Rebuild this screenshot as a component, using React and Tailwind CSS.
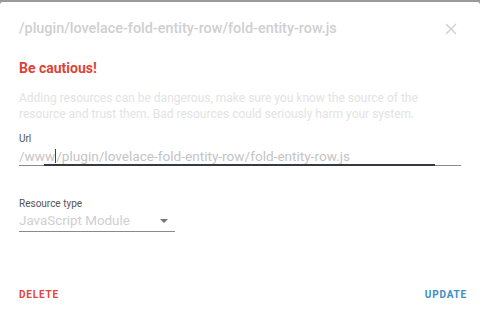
export default function App() {
  return (
    <div className="w-[480px] h-[314px] bg-[#9a9a9a] pt-[2px] overflow-hidden" style={{ fontFamily: "Roboto, 'Noto Sans', sans-serif" }}>
      <div className="h-[314px] bg-white rounded-[3px] flex flex-col">
        {/* Header */}
        <div className="flex items-center justify-between pl-[19px] pr-[23px] pt-[15px] h-[38px]">
          <h2 className="text-[14.4px] font-medium text-[#cfcfcf] leading-[20px]">
            /plugin/lovelace-fold-entity-row/fold-entity-row.js
          </h2>
          <svg width="12" height="12" viewBox="0 0 12 12" className="text-[#cfcfcf]">
            <path d="M1 1L11 11M11 1L1 11" stroke="currentColor" strokeWidth="1.4" />
          </svg>
        </div>

        <div className="px-[19px] flex flex-col">
          <div className="mt-[19px] text-[14px] font-bold text-[#db4437] leading-[18px]">Be cautious!</div>
          <p className="mt-[13px] text-[12px] leading-[16px] text-[#e3e3e3]">
            Adding resources can be dangerous, make sure you know the source of the resource and trust them. Bad resources could seriously harm your system.
          </p>

          {/* Url field */}
          <div className="mt-[11px] w-[442px]">
            <div className="text-[10px] text-[#555] leading-[12px]">Url</div>
            <div className="relative text-[13.6px] text-[#c4c4c4] leading-[18px] mt-[2px] pb-[1px]">
              <span>/www</span>
              <span className="inline-block w-px h-[14px] bg-[#444] align-[-2px]"></span>
              <span>/plugin/lovelace-fold-entity-row/fold-entity-row.js</span>
              <div className="absolute left-0 right-0 bottom-0 h-px bg-[#8a8a8a]"></div>
              <div className="absolute left-[25px] right-[26px] bottom-0 h-[2px] bg-[#343a40]"></div>
            </div>
          </div>

          {/* Resource type */}
          <div className="mt-[32px] w-[156px]">
            <div className="text-[10px] text-[#555] leading-[12px]">Resource type</div>
            <div className="flex items-center justify-between text-[13.4px] text-[#cfcfcf] leading-[18px] mt-[2px] pb-[1px] border-b border-[#8a8a8a]">
              <span>JavaScript Module</span>
              <svg width="8" height="4" viewBox="0 0 8 4" className="mr-[7px]">
                <path d="M0 0H8L4 4Z" fill="#757575" />
              </svg>
            </div>
          </div>
        </div>

        {/* Actions */}
        <div className="mt-auto mb-[15px] flex justify-between px-[19px] pr-[13px] text-[10px] font-bold tracking-[0.8px] leading-[12px]">
          <button className="text-[#e0463b]">DELETE</button>
          <button className="text-[#3a8dc8]">UPDATE</button>
        </div>
      </div>
    </div>
  );
}
